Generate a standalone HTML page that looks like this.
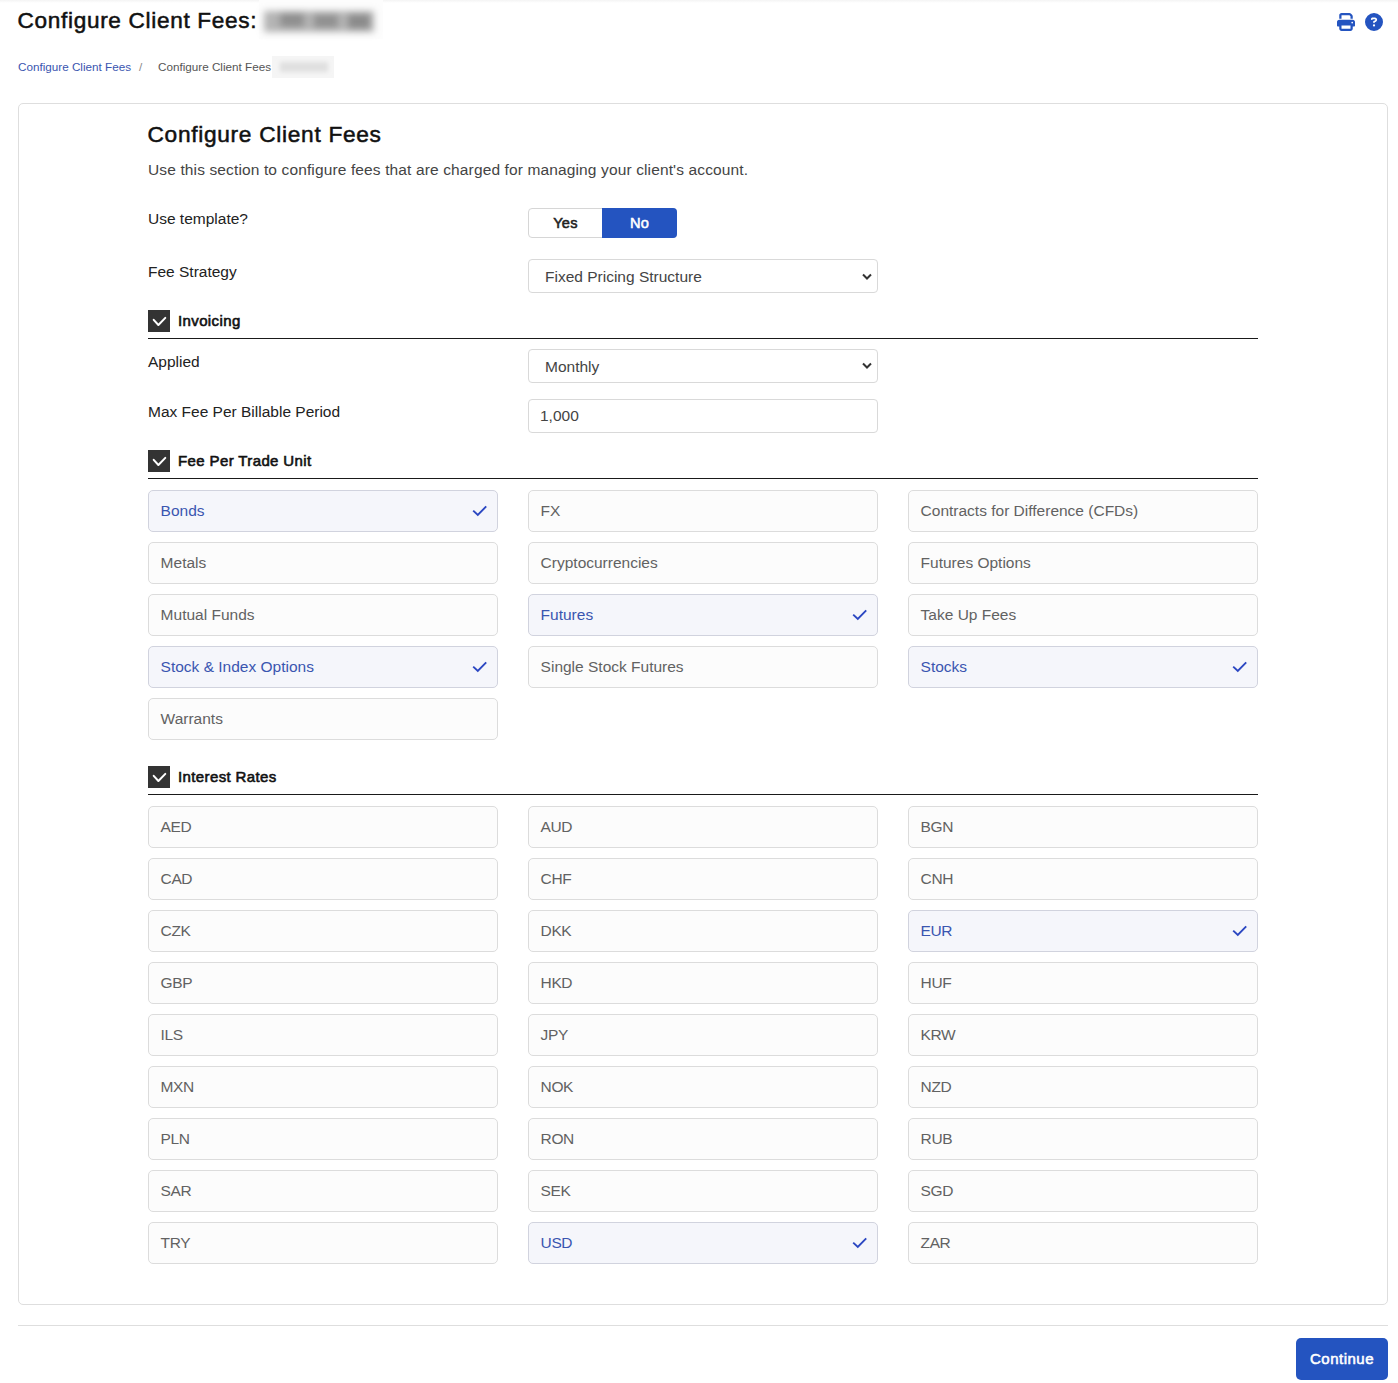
<!DOCTYPE html>
<html lang="en">
<head>
<meta charset="utf-8">
<title>Configure Client Fees</title>
<style>
*{box-sizing:border-box;margin:0;padding:0}
html,body{width:1398px;height:1383px;background:#fff;overflow:hidden}
body{font-family:"Liberation Sans",sans-serif;font-size:15.5px;color:#222;position:relative}
.topshade{position:absolute;left:0;top:0;width:1398px;height:3px;background:linear-gradient(#f4f4f4,#fff)}
.title{position:absolute;left:17.5px;top:6px;font-size:22.6px;font-weight:400;-webkit-text-stroke:.52px #111;letter-spacing:.68px;color:#111;line-height:30px;white-space:nowrap}
.blur1{position:absolute;left:252px;top:0}
.crumbs{position:absolute;left:18px;top:60px;font-size:11.7px;line-height:14px;color:#555;white-space:nowrap}
.crumbs a{color:#3a55b0;text-decoration:none}
.crumbs .sep{color:#888;position:absolute;left:121px}
.crumbs .cur{position:absolute;left:140px}
.icons{position:absolute;top:13px;left:1337px}
.panel{position:absolute;left:18px;top:103px;width:1370px;height:1202px;border:1px solid #dedede;border-radius:5px;background:#fff}
.inner{position:absolute;left:129px;top:0;width:1110px}
h2{position:absolute;left:-.5px;top:16px;font-size:22.7px;letter-spacing:.7px;font-weight:400;-webkit-text-stroke:.52px #111;color:#111;line-height:28px;white-space:nowrap}
.desc{position:absolute;left:0;top:56px;color:#444;line-height:20px;white-space:nowrap;letter-spacing:.13px}
.lbl{position:absolute;left:0;color:#222;line-height:20px;white-space:nowrap}
.toggle{position:absolute;left:380px;top:104px;width:149px;height:30px;border:1px solid #d6d6d6;border-radius:4px;display:flex;font-weight:400;font-size:14.6px;letter-spacing:.25px;line-height:28px;text-align:center}
.toggle .y{width:73px;color:#222;-webkit-text-stroke:.55px #222}
.toggle .n{flex:1;color:#fff;-webkit-text-stroke:.55px #fff;background:#2454c0;margin:-1px -1px -1px 0;line-height:30px;border-radius:0 4px 4px 0}
.field{position:absolute;left:380px;width:350px;height:34px;border:1px solid #d9d9d9;border-radius:4px;background:#fff;color:#444;line-height:32px;padding-left:16px;white-space:nowrap}
.field.inp{padding-left:11px}
.field.sel{line-height:34px}
.field svg{position:absolute;right:4px;top:12px}
.sec{position:absolute;left:0;width:1110px;height:29px;border-bottom:1px solid #1a1a1a}
.sec .cb{position:absolute;left:0;top:0;width:22px;height:22px;background:#333}
.sec .cb svg{position:absolute;left:0;top:0}
.sec b{position:absolute;left:30px;top:1px;font-size:15px;font-weight:400;-webkit-text-stroke:.6px #111;letter-spacing:.38px;line-height:20px;color:#111;white-space:nowrap}
.grid{position:absolute;left:0;width:1110px;display:grid;grid-template-columns:350px 350px 350px;column-gap:30px;row-gap:10px}
.c{height:42px;border:1px solid #dcdcdc;border-radius:5px;background:#fcfcfc;color:#626262;line-height:40px;padding-left:11.6px;position:relative;white-space:nowrap}
.cur .c{letter-spacing:-.4px}
.c.s{background:#f5f6fb;border-color:#d1d3de;color:#3a55b0}
.c svg{position:absolute;right:8px;top:13px}
.hr{position:absolute;left:18px;top:1325px;width:1370px;height:1px;background:#dedede}
.btn{position:absolute;left:1296px;top:1338px;width:92px;height:42px;border-radius:5px;background:#2454c0;color:#fff;font-weight:400;-webkit-text-stroke:.55px #fff;letter-spacing:.5px;font-size:15px;line-height:42px;text-align:center}
</style>
</head>
<body>
<div class="topshade"></div>
<div class="title">Configure Client Fees:</div>
<div style="position:absolute;left:259px;top:0;width:124px;height:39px;background:#fdfdfd"></div>
<svg class="blur1" width="140" height="44" viewBox="0 0 140 44"><defs><filter id="bl" x="-20%" y="-80%" width="140%" height="260%"><feGaussianBlur stdDeviation="3.8"/></filter><filter id="bl2" x="-20%" y="-80%" width="140%" height="260%"><feGaussianBlur stdDeviation="2.2"/></filter></defs><g filter="url(#bl)"><rect x="12" y="11" width="110" height="21" fill="#b4b4b4"/><rect x="28" y="13" width="24" height="14" fill="#8e8e8e"/><rect x="62" y="14" width="24" height="14" fill="#909090"/><rect x="96" y="14" width="22" height="15" fill="#8a8a8a"/></g></svg>
<div style="position:absolute;left:272px;top:56px;width:62px;height:22px;background:#f5f5f5"></div>
<svg style="position:absolute;left:272px;top:56px" width="62" height="22" viewBox="0 0 62 22"><rect x="8" y="6" width="48" height="10" fill="#e0e0e0" filter="url(#bl2)"/></svg>
<div class="crumbs"><a>Configure Client Fees</a><span class="sep">/</span><span class="cur">Configure Client Fees</span></div>
<svg style="position:absolute;left:1337px;top:13px" width="18" height="18" viewBox="0 0 512 512"><path fill="#2454c0" d="M128 0C92.700 0 64 28.700 64 64v96h64V64H354.700L384 93.300V160h64V93.300c0-17-6.700-33.300-18.700-45.300L400 18.700C388 6.700 371.700 0 354.700 0H128zM384 352v32 64H128V384 368 352H384zm64 32h32c17.700 0 32-14.300 32-32V256c0-35.300-28.700-64-64-64H64c-35.300 0-64 28.700-64 64v96c0 17.700 14.300 32 32 32H64v64c0 35.300 28.700 64 64 64H384c35.300 0 64-28.700 64-64V384zM432 248a24 24 0 1 1 0 48 24 24 0 1 1 0-48z"/></svg>
<svg style="position:absolute;left:1364.7px;top:13px" width="18" height="18" viewBox="0 0 512 512"><path fill="#2454c0" d="M256 512A256 256 0 1 0 256 0a256 256 0 1 0 0 512zM169.800 165.300c7.900-22.300 29.100-37.300 52.800-37.300h58.300c34.900 0 63.100 28.300 63.100 63.100c0 22.600-12.100 43.500-31.700 54.800L280 264.400c-.2 13-10.900 23.600-24 23.600c-13.300 0-24-10.700-24-24V250.500c0-8.600 4.600-16.500 12.100-20.800l44.300-25.400c4.700-2.700 7.600-7.700 7.600-13.100c0-8.400-6.800-15.100-15.100-15.100H222.600c-3.400 0-6.400 2.100-7.500 5.300l-.4 1.200c-4.400 12.500-18.200 19-30.600 14.600s-19-18.200-14.600-30.600l.4-1.200zM224 352a32 32 0 1 1 64 0 32 32 0 1 1 -64 0z"/></svg>

<div class="panel"><div class="inner">
<h2>Configure Client Fees</h2>
<div class="desc">Use this section to configure fees that are charged for managing your client's account.</div>

<div class="lbl" style="top:105px">Use template?</div>
<div class="toggle"><div class="y">Yes</div><div class="n">No</div></div>

<div class="lbl" style="top:158px">Fee Strategy</div>
<div class="field sel" style="top:155px">Fixed Pricing Structure<svg style="top:13px" width="12" height="8" viewBox="0 0 12 8"><path d="M2 1.5 L6 5.5 L10 1.5" fill="none" stroke="#333" stroke-width="2"/></svg></div>

<div class="sec" style="top:206px"><span class="cb"><svg width="22" height="22" viewBox="0 0 22 22"><path d="M5.7 9.8 L10.4 15 L17.3 7.9" fill="none" stroke="#fff" stroke-width="2" stroke-linecap="round" stroke-linejoin="round"/></svg></span><b>Invoicing</b></div>

<div class="lbl" style="top:248px">Applied</div>
<div class="field sel" style="top:245px">Monthly<svg width="12" height="8" viewBox="0 0 12 8"><path d="M2 1.5 L6 5.5 L10 1.5" fill="none" stroke="#333" stroke-width="2"/></svg></div>

<div class="lbl" style="top:298px">Max Fee Per Billable Period</div>
<div class="field inp" style="top:295px">1,000</div>

<div class="sec" style="top:346px"><span class="cb"><svg width="22" height="22" viewBox="0 0 22 22"><path d="M5.7 9.8 L10.4 15 L17.3 7.9" fill="none" stroke="#fff" stroke-width="2" stroke-linecap="round" stroke-linejoin="round"/></svg></span><b>Fee Per Trade Unit</b></div>

<div class="grid" style="top:386px">
<div class="c s">Bonds<svg width="18" height="14" viewBox="0 0 18 14"><path d="M2.2 6.6 L6.8 11 L15.2 2.4" fill="none" stroke="#2b47c2" stroke-width="1.9" stroke-linecap="butt" stroke-linejoin="miter"/></svg></div><div class="c">FX</div><div class="c">Contracts for Difference (CFDs)</div>
<div class="c">Metals</div><div class="c">Cryptocurrencies</div><div class="c">Futures Options</div>
<div class="c">Mutual Funds</div><div class="c s">Futures<svg width="18" height="14" viewBox="0 0 18 14"><path d="M2.2 6.6 L6.8 11 L15.2 2.4" fill="none" stroke="#2b47c2" stroke-width="1.9" stroke-linecap="butt" stroke-linejoin="miter"/></svg></div><div class="c">Take Up Fees</div>
<div class="c s">Stock &amp; Index Options<svg width="18" height="14" viewBox="0 0 18 14"><path d="M2.2 6.6 L6.8 11 L15.2 2.4" fill="none" stroke="#2b47c2" stroke-width="1.9" stroke-linecap="butt" stroke-linejoin="miter"/></svg></div><div class="c">Single Stock Futures</div><div class="c s">Stocks<svg width="18" height="14" viewBox="0 0 18 14"><path d="M2.2 6.6 L6.8 11 L15.2 2.4" fill="none" stroke="#2b47c2" stroke-width="1.9" stroke-linecap="butt" stroke-linejoin="miter"/></svg></div>
<div class="c">Warrants</div>
</div>

<div class="sec" style="top:662px"><span class="cb"><svg width="22" height="22" viewBox="0 0 22 22"><path d="M5.7 9.8 L10.4 15 L17.3 7.9" fill="none" stroke="#fff" stroke-width="2" stroke-linecap="round" stroke-linejoin="round"/></svg></span><b>Interest Rates</b></div>

<div class="grid cur" style="top:702px">
<div class="c">AED</div><div class="c">AUD</div><div class="c">BGN</div>
<div class="c">CAD</div><div class="c">CHF</div><div class="c">CNH</div>
<div class="c">CZK</div><div class="c">DKK</div><div class="c s">EUR<svg width="18" height="14" viewBox="0 0 18 14"><path d="M2.2 6.6 L6.8 11 L15.2 2.4" fill="none" stroke="#2b47c2" stroke-width="1.9" stroke-linecap="butt" stroke-linejoin="miter"/></svg></div>
<div class="c">GBP</div><div class="c">HKD</div><div class="c">HUF</div>
<div class="c">ILS</div><div class="c">JPY</div><div class="c">KRW</div>
<div class="c">MXN</div><div class="c">NOK</div><div class="c">NZD</div>
<div class="c">PLN</div><div class="c">RON</div><div class="c">RUB</div>
<div class="c">SAR</div><div class="c">SEK</div><div class="c">SGD</div>
<div class="c">TRY</div><div class="c s">USD<svg width="18" height="14" viewBox="0 0 18 14"><path d="M2.2 6.6 L6.8 11 L15.2 2.4" fill="none" stroke="#2b47c2" stroke-width="1.9" stroke-linecap="butt" stroke-linejoin="miter"/></svg></div><div class="c">ZAR</div>
</div>
</div></div>

<div class="hr"></div>
<div class="btn">Continue</div>
</body>
</html>
